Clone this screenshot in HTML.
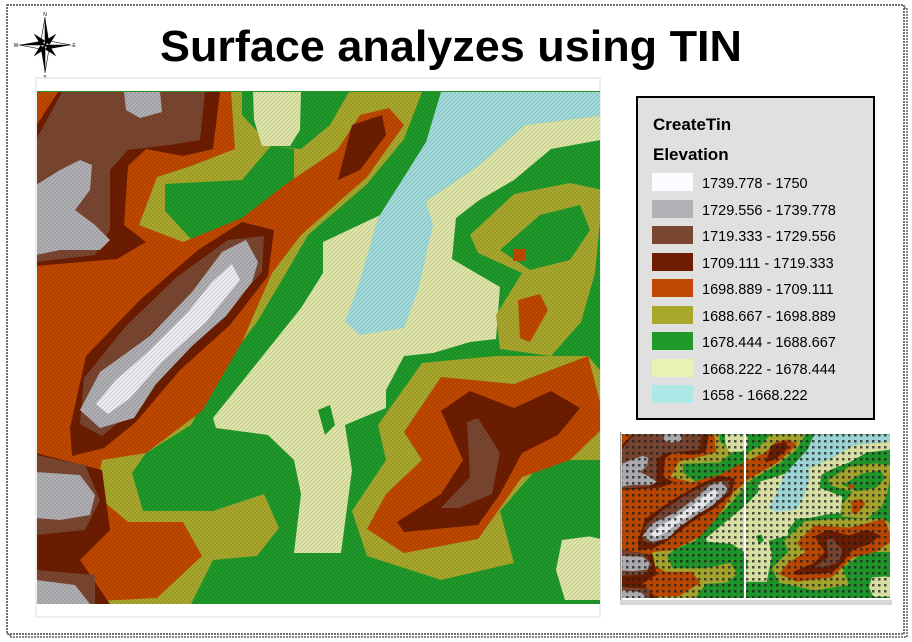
<!DOCTYPE html>
<html><head><meta charset="utf-8"><style>
html,body{margin:0;padding:0;background:#fff;width:912px;height:642px;overflow:hidden}
svg{display:block}
text{font-family:"Liberation Sans",Arial,sans-serif}
</style></head><body>
<svg width="912" height="642" viewBox="0 0 912 642" xmlns="http://www.w3.org/2000/svg">
<defs>
<clipPath id="mc"><rect x="37" y="91" width="563" height="513"/></clipPath>
<pattern id="dots" width="6" height="6" patternUnits="userSpaceOnUse"><rect x="2" y="2" width="2.5" height="2.5" fill="#1a1a1a" opacity="0.75"/></pattern>
<pattern id="tex" width="4" height="4" patternUnits="userSpaceOnUse"><path d="M0 4L4 0" stroke="#000" stroke-width="0.8" opacity="0.15"/></pattern>
<g id="map">
<rect x="30" y="85" width="580" height="525" fill="#1f9a2a"/>
<polygon fill="#a9a82c" points="36,92 422,92 404,139 367,184 308,235 286,273 257,322 216,377 191,425 146,453 132,473 143,511 213,511 264,494 279,528 257,556 213,560 191,604 36,604"/>
<polygon fill="#1f9a2a" points="165,184 242,180 271,146 294,149 294,190 242,235 191,239 165,211"/>
<polygon fill="#1f9a2a" points="242,92 349,92 330,125 301,149 271,146 242,115"/>
<polygon fill="#c04800" points="36,92 231,92 235,149 191,166 157,177 139,225 183,242 242,218 286,184 338,149 360,115 389,108 404,125 367,177 301,235 272,273 242,342 202,411 146,453 102,460 95,494 128,522 183,522 202,556 157,598 36,604"/>
<polygon fill="#6e1d00" points="36,126 58,92 220,92 213,149 183,156 146,149 128,166 124,225 146,242 117,259 36,266"/>
<polygon fill="#6e1d00" points="70,428 86,356 140,300 198,250 242,222 274,230 268,276 230,325 180,370 136,422 104,448 72,456"/>
<polygon fill="#6e1d00" points="338,180 352,125 382,115 386,135 360,170"/>
<polygon fill="#6e1d00" points="36,453 102,470 110,530 80,560 110,604 36,604"/>
<polygon fill="#7a4630" points="62,92 205,92 200,140 170,145 128,150 110,170 110,230 95,255 36,262 36,140"/>
<polygon fill="#7a4630" points="80,424 84,378 126,326 178,276 228,240 264,236 262,272 224,314 174,364 134,410 102,436"/>
<polygon fill="#7a4630" points="36,455 85,465 100,500 85,530 36,535"/>
<polygon fill="#7a4630" points="36,570 95,575 95,604 36,604"/>
<polygon fill="#b0b0b4" points="80,410 100,372 150,336 192,292 222,252 246,240 258,262 252,282 226,316 192,346 156,384 134,418 100,428"/>
<polygon fill="#ececf2" points="96,404 116,380 148,352 188,312 212,282 232,264 240,280 206,322 162,362 130,398 108,414"/>
<polygon fill="#b0b0b4" points="36,185 60,170 80,160 92,165 90,190 75,210 95,225 110,240 100,250 60,250 36,255"/>
<polygon fill="#b0b0b4" points="124,92 160,92 162,112 140,118 126,110"/>
<polygon fill="#b0b0b4" points="36,472 80,475 95,495 90,515 60,520 36,518"/>
<polygon fill="#b0b0b4" points="36,580 75,585 90,604 36,604"/>
<polygon fill="#dfe6a8" points="323,242 389,211 426,201 478,166 525,125 606,115 606,139 551,149 514,180 478,201 456,218 452,259 500,287 496,339 470,342 433,353 404,356 386,390 386,408 352,422 345,425 352,470 341,553 294,553 301,494 294,460 268,435 216,428 213,418 257,363 301,308 323,273"/>
<polygon fill="#dfe6a8" points="253,92 301,92 300,130 290,146 262,146 254,120"/>
<polygon fill="#dfe6a8" points="562,540 600,535 606,600 565,600 556,570"/>
<polygon fill="#a9a82c" points="470,235 514,194 570,183 603,190 595,273 581,322 551,356 500,349 496,315 522,273 478,253"/>
<polygon fill="#1f9a2a" points="500,250 540,215 580,205 590,230 570,260 530,270"/>
<polygon fill="#c04800" points="518,300 540,294 548,310 530,342 520,338"/>
<rect x="513" y="249" width="12" height="12" fill="#c04800"/>
<polygon fill="#a2dcdc" points="441,92 606,92 606,115 525,125 478,166 426,201 433,225 419,287 404,328 360,335 345,322 360,280 378,218 404,177 426,142"/>
<polygon fill="#a9a82c" points="378,425 422,363 496,356 588,356 606,377 606,460 544,460 500,511 514,563 441,580 367,556 352,511 386,460"/>
<polygon fill="#1f9a2a" points="544,470 606,460 606,540 560,530"/>
<polygon fill="#c04800" points="404,432 441,377 514,384 588,356 606,425 570,460 522,477 478,539 404,553 367,529 386,494 422,460"/>
<polygon fill="#6e1d00" points="441,411 470,391 514,408 551,391 580,408 558,435 522,453 500,494 478,525 404,532 397,522 441,494 463,460"/>
<polygon fill="#7a4630" points="467,422 478,418 500,453 492,494 459,508 441,508 470,477"/>
<polygon fill="#1f9a2a" points="318,410 330,405 335,425 325,435"/>
<rect x="30" y="85" width="580" height="525" fill="url(#tex)"/>
</g>
</defs>

<rect x="10" y="8" width="897" height="629" fill="none" stroke="#888" stroke-width="2" stroke-dasharray="2,1"/>
<rect x="7" y="5" width="897" height="629" fill="#fff" stroke="#444" stroke-width="1.5" stroke-dasharray="2,1"/>

<g transform="translate(45,45)">
<polygon points="0,-28 4,-4 0,0" fill="#000"/><polygon points="0,-28 -4,-4 0,0" fill="#fff" stroke="#000" stroke-width="0.6"/>
<polygon points="0,28 -4,4 0,0" fill="#000"/><polygon points="0,28 4,4 0,0" fill="#fff" stroke="#000" stroke-width="0.6"/>
<polygon points="-26,0 -4,-4 0,0" fill="#000"/><polygon points="-26,0 -4,4 0,0" fill="#fff" stroke="#000" stroke-width="0.6"/>
<polygon points="26,0 4,4 0,0" fill="#000"/><polygon points="26,0 4,-4 0,0" fill="#fff" stroke="#000" stroke-width="0.6"/>
<g transform="rotate(45)">
<polygon points="0,-16 3,-3 -3,-3" fill="#000"/><polygon points="0,16 3,3 -3,3" fill="#000"/>
<polygon points="-16,0 -3,3 -3,-3" fill="#000"/><polygon points="16,0 3,3 3,-3" fill="#000"/>
</g>
<text x="0" y="-29" font-size="5" text-anchor="middle">N</text>
<text x="0" y="34" font-size="5" text-anchor="middle">S</text>
<text x="-29" y="2" font-size="5" text-anchor="middle">W</text>
<text x="29" y="2" font-size="5" text-anchor="middle">E</text>
</g>

<text x="451" y="61" font-size="44" font-weight="bold" text-anchor="middle" fill="#000" textLength="582" lengthAdjust="spacingAndGlyphs">Surface analyzes using TIN</text>

<rect x="36" y="78" width="564" height="539" fill="#fff" stroke="#ddd" stroke-width="1"/>
<g clip-path="url(#mc)"><use href="#map"/></g>

<rect x="637" y="97" width="237" height="322" fill="#e0e0e0" stroke="#000" stroke-width="2"/>
<text x="653" y="130" font-size="17" font-weight="bold">CreateTin</text>
<text x="653" y="160" font-size="17" font-weight="bold">Elevation</text>
<g font-size="14.5" fill="#000">
<rect x="652" y="173" width="41" height="18" fill="#fcfbff"/><text x="702" y="188">1739.778 - 1750</text>
<rect x="652" y="200" width="41" height="18" fill="#b1b0b4"/><text x="702" y="215">1729.556 - 1739.778</text>
<rect x="652" y="226" width="41" height="18" fill="#7a4630"/><text x="702" y="241">1719.333 - 1729.556</text>
<rect x="652" y="253" width="41" height="18" fill="#6e1d00"/><text x="702" y="268">1709.111 - 1719.333</text>
<rect x="652" y="279" width="41" height="18" fill="#c04800"/><text x="702" y="294">1698.889 - 1709.111</text>
<rect x="652" y="306" width="41" height="18" fill="#a9a82c"/><text x="702" y="321">1688.667 - 1698.889</text>
<rect x="652" y="332" width="41" height="18" fill="#1f9a2a"/><text x="702" y="347">1678.444 - 1688.667</text>
<rect x="652" y="359" width="41" height="18" fill="#e8f2b4"/><text x="702" y="374">1668.222 - 1678.444</text>
<rect x="652" y="385" width="41" height="18" fill="#aee8e6"/><text x="702" y="400">1658 - 1668.222</text>
</g>

<svg x="622" y="434" width="268" height="164" viewBox="37 91 563 513" preserveAspectRatio="none"><use href="#map"/></svg>
<rect x="622" y="434" width="268" height="164" fill="url(#dots)"/>
<rect x="744" y="432" width="2" height="180" fill="#fff"/>
<rect x="620" y="432" width="1.5" height="168" fill="#999"/>
<rect x="620" y="600" width="272" height="5" fill="#d8d8d8"/>
</svg>
</body></html>
